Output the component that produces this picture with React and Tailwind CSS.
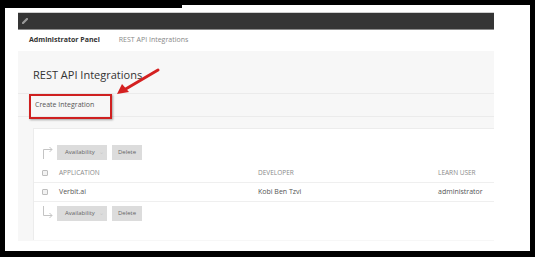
import React from "react";

const font = { fontFamily: "'Open Sans', 'Liberation Sans', sans-serif" };

const Bracket = ({ up }) => (
  <svg width="12" height="14" viewBox="0 0 12 14" className="shrink-0">
    {up ? (
      <path d="M1.5 14 V4.5 H10 M7.5 2 L10 4.5 L7.5 7" fill="none" stroke="#c4c4c4" strokeWidth="1" />
    ) : (
      <path d="M1.5 0 V9.5 H10 M7.5 7 L10 9.5 L7.5 12" fill="none" stroke="#c4c4c4" strokeWidth="1" />
    )}
  </svg>
);

const Toolbar = ({ up }) => (
  <div className="flex items-center h-[16px] pl-[8px]">
    <Bracket up={up} />
    <div className="ml-[3px] flex items-center gap-[5px]">
      <div className="h-[15px] w-[50px] bg-[#dcdcdc] flex items-center pl-[8px] text-[6px] text-[#666]">
        Availability
        <span className="ml-[4px] text-[#c8c8c8] text-[6px]">⌄</span>
      </div>
      <div className="h-[15px] w-[30px] bg-[#dcdcdc] flex items-center justify-center text-[6px] text-[#666]">
        Delete
      </div>
    </div>
  </div>
);

const Check = () => (
  <div className="w-[6px] h-[6px] border border-[#bdbdbd] bg-[#f2f2f2] rounded-[1px]" />
);

const Row = ({ cells, head, h }) => (
  <div className={`flex items-center ${h} pl-[8px] border-b border-[#efefef] ${head ? "text-[#8a8a8a] text-[6.5px]" : "text-[#555] text-[7px]"}`}>
    <div className="w-[17px]">
      <Check />
    </div>
    <div className="w-[199px]">{cells[0]}</div>
    <div className="w-[180px]">{cells[1]}</div>
    <div>{cells[2]}</div>
  </div>
);

export default function App() {
  return (
    <div className="w-[535px] h-[257px] bg-black relative overflow-hidden" style={font}>
      {/* cropped caption on top */}
      <div className="absolute left-0 top-0 w-[182px] h-[8px] bg-black overflow-hidden z-10">
        <div className="mt-[-20px] pl-[40px] text-[15px] text-white leading-[18px] whitespace-nowrap">
          Creating an Integration
        </div>
      </div>

      <div className="mt-[5px] ml-[5px] w-[525px] h-[246px] bg-white pt-[7px] pl-[13px]">
        <div className="w-[476px]">
          {/* dark bar */}
          <div className="h-[18px] bg-[#353535] border-t border-[#cfcfcf] border-b border-b-[#8c8c8c] flex items-center pl-[4px]">
            <svg width="6" height="6" viewBox="0 0 6 6">
              <path d="M1 5 L5 1" stroke="#9a9a9a" strokeWidth="2.2" strokeLinecap="round" />
            </svg>
          </div>

          {/* breadcrumb nav */}
          <div className="h-[21px] flex items-center pl-[11px] text-[7px]">
            <span className="font-bold text-[#333]">Administrator Panel</span>
            <span className="ml-[19px] text-[#888]">REST API Integrations</span>
          </div>

          {/* gray panel */}
          <div className="bg-[#f7f7f7] h-[190px] relative">
            <div className="h-[43px] border-b border-[#ebebeb] pl-[15px] pt-[17px] text-[11px] text-[#333] leading-[14px]">
              REST API Integrations
            </div>
            <div className="h-[23px] border-b border-[#ebebeb] pl-[17px] flex items-center text-[7px] text-[#555]">
              Create Integration
            </div>

            {/* annotation box + arrow */}
            <div className="absolute left-[11px] top-[43px] w-[83px] h-[25px] border-2 border-[#cf2020] shadow-[1px_1px_2px_rgba(0,0,0,0.35)]" />
            <svg className="absolute left-[96px] top-[16px]" width="50" height="30" viewBox="0 0 50 30">
              <path d="M44 3 L10 23" stroke="#d42020" strokeWidth="3" strokeLinecap="round" />
              <path d="M3 27 L8 17 L15 25 Z" fill="#d42020" />
            </svg>

            {/* white card */}
            <div className="mt-[11px] ml-[15px] h-[112px] bg-white border-l border-t border-[#ececec] pt-[15px]">
              <Toolbar up />
              <div className="mt-[3px]">
                <Row head h="h-[20px]" cells={["APPLICATION", "DEVELOPER", "LEARN USER"]} />
                <Row h="h-[19px]" cells={["Verbit.ai", "Kobi Ben Tzvi", "administrator"]} />
              </div>
              <div className="mt-[3px]">
                <Toolbar />
              </div>
            </div>
          </div>
        </div>
      </div>
    </div>
  );
}
